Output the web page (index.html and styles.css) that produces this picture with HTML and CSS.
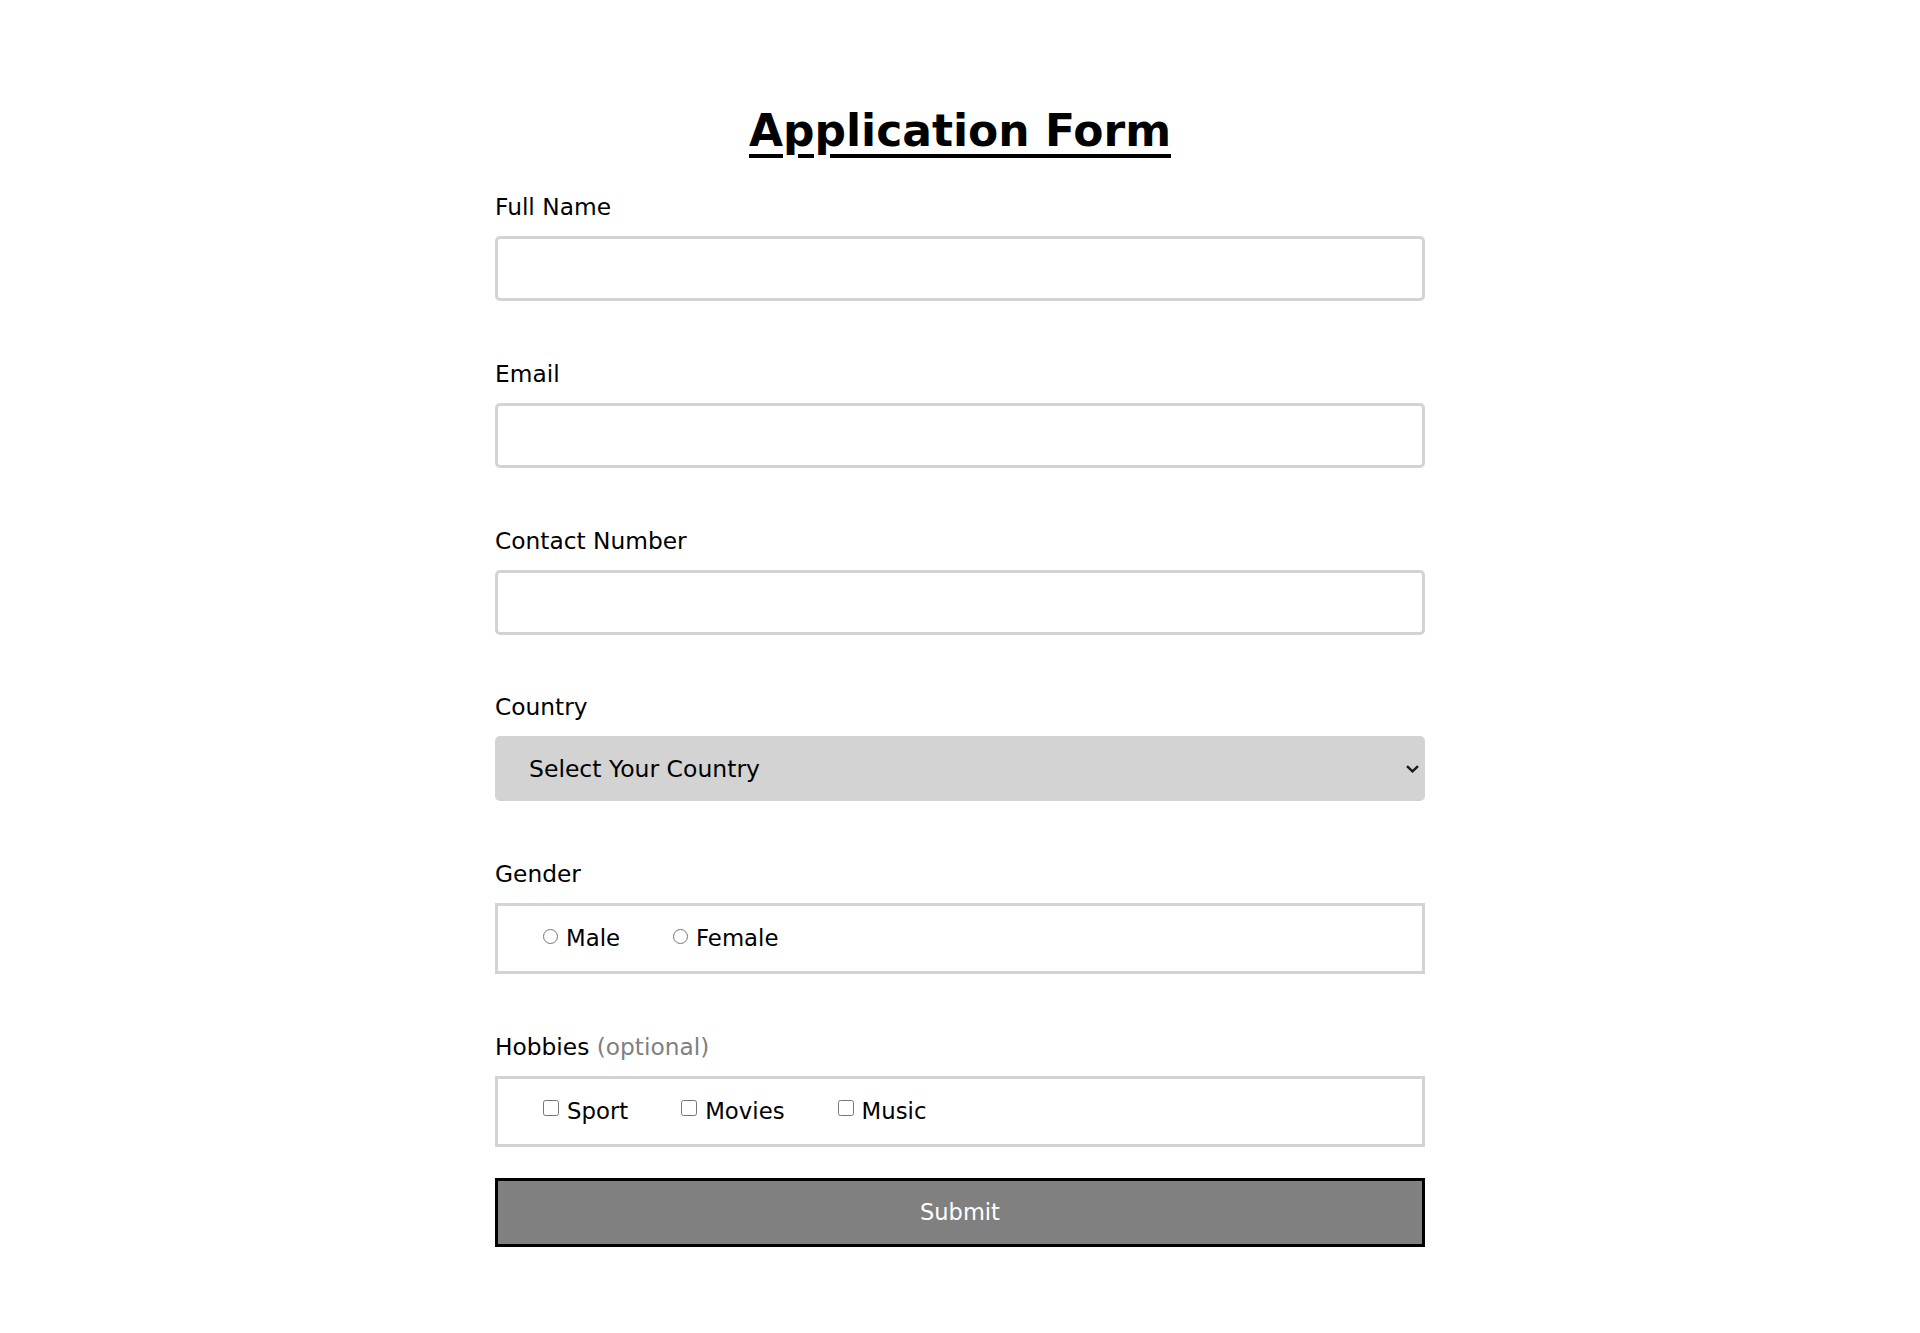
FILE: index.html
```html
<!DOCTYPE html>
<html lang="en">
  <head>
    <meta charset="UTF-8" />
    <meta name="viewport" content="width=device-width, initial-scale=1.0" />
    <title>Application Form</title>
    <link rel="stylesheet" href="styles.css">
  </head>
  <body>
    <div class="container">
      <h1>Application Form</h1>
      <form class="app-form" onsubmit="return false">
        <div class="fields">
          <div class="field">
            <label class="field-label" for="fullname">Full Name</label>
            <input type="text" id="fullname" class="text-input" />
          </div>

          <div class="field">
            <label class="field-label" for="email">Email</label>
            <input type="email" id="email" class="text-input" />
          </div>

          <div class="field">
            <label class="field-label" for="contact">Contact Number</label>
            <input type="tel" id="contact" class="text-input" />
          </div>

          <div class="field">
            <label class="field-label" for="country">Country</label>
            <div class="select-wrap">
              <select id="country" class="country-select">
                <option>Select Your Country</option>
                <option>India</option>
                <option>Bangladesh</option>
                <option>Nepal</option>
              </select>
              <svg class="chevron" width="13" height="8" viewBox="0 0 13 8">
                <path d="M1 1.2 L6.5 6.4 L12 1.2" fill="none" stroke="#1a1a1a" stroke-width="2.4" />
              </svg>
            </div>
          </div>

          <div class="field">
            <span class="field-label">Gender</span>
            <div class="options">
              <label class="option"><input type="radio" name="gender" />Male</label>
              <label class="option"><input type="radio" name="gender" />Female</label>
            </div>
          </div>

          <div class="field">
            <span class="field-label">Hobbies <span class="muted">(optional)</span></span>
            <div class="options">
              <label class="option"><input type="checkbox" />Sport</label>
              <label class="option"><input type="checkbox" />Movies</label>
              <label class="option"><input type="checkbox" />Music</label>
            </div>
          </div>
        </div>

        <button type="submit" class="submit-btn">Submit</button>
      </form>
    </div>
  </body>
</html>
```

FILE: styles.css
```css
* {
  margin: 0;
  padding: 0;
  box-sizing: border-box;
}

body {
  font-family: "DejaVu Sans", "Liberation Sans", sans-serif;
  color: #000;
  background: #fff;
}

.container {
  width: 930px;
  margin: 0 auto;
  padding-top: 106px;
}

h1 {
  text-align: center;
  font-size: 44px;
  line-height: 50px;
  font-weight: bold;
  text-decoration: underline;
  text-decoration-thickness: 4px;
  text-underline-offset: 8px;
  margin-bottom: 37px;
}

.fields {
  display: flex;
  flex-direction: column;
  gap: 58.8px;
}

.field-label {
  display: block;
  font-size: 23.3px;
  line-height: 27px;
  margin-bottom: 16px;
}

.muted {
  color: #808080;
}

.text-input {
  display: block;
  width: 100%;
  height: 65px;
  border: 3px solid #d3d3d3;
  border-radius: 5px;
  padding: 0 16px;
  font-family: inherit;
  font-size: 22px;
  outline: none;
}

.select-wrap {
  position: relative;
}

.country-select {
  display: block;
  width: 100%;
  height: 65px;
  border: none;
  border-radius: 5px;
  background: #d3d3d3;
  color: #000;
  padding: 0 34px;
  font-family: inherit;
  font-size: 23.5px;
  appearance: none;
  -webkit-appearance: none;
  outline: none;
}

.chevron {
  position: absolute;
  right: 6px;
  top: 29px;
  pointer-events: none;
}

.options {
  display: flex;
  align-items: center;
  gap: 53px;
  height: 71px;
  border: 3px solid #d3d3d3;
  padding-left: 45px;
}

.option {
  display: flex;
  align-items: center;
  gap: 8px;
  font-size: 22.8px;
  line-height: 27px;
}

.option input[type="radio"] {
  width: 15px;
  height: 15px;
  margin: 0;
  position: relative;
  top: -2px;
}

.option input[type="checkbox"] {
  width: 16px;
  height: 16px;
  margin: 0;
  position: relative;
  top: -3px;
}

.submit-btn {
  display: block;
  width: 100%;
  height: 69px;
  margin-top: 31px;
  border: 3px solid #000;
  background-color: #808080;
  color: #fff;
  font-family: inherit;
  font-size: 22.5px;
  cursor: pointer;
}
```
